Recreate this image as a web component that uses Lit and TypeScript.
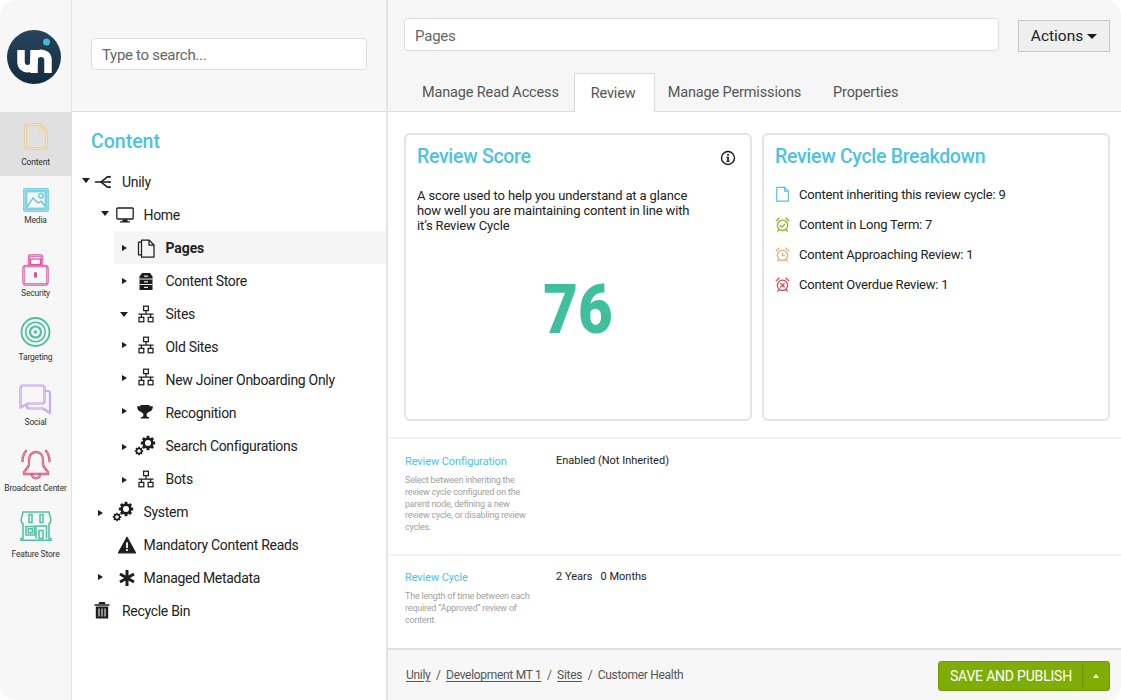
import { LitElement, html, css, svg } from "lit";
import { customElement } from "lit/decorators.js";

const INK = "#1d1d1d";

const sitemap = svg`<g fill="none" stroke="${INK}" stroke-width="1.250"><rect x="9.600" y="4.200" width="4.800" height="4.400"/><rect x="5" y="15.400" width="4.800" height="4.400"/><rect x="14.200" y="15.400" width="4.800" height="4.400"/><path d="M12 8.600v3.600M4.500 12.200h15M7.400 12.200v3.200M16.600 12.200v3.200"/></g>`;
const gear = (cx: number, cy: number, r: number) => {
  const teeth = [0, 45, 90, 135].map(
    (a) => svg`<rect x="${cx - r}" y="${cy - r * 0.2}" width="${r * 2}" height="${r * 0.4}" fill="${INK}" transform="rotate(${a} ${cx} ${cy})"/>`
  );
  return svg`${teeth}<circle cx="${cx}" cy="${cy}" r="${r * 0.78}" fill="${INK}"/><circle cx="${cx}" cy="${cy}" r="${r * 0.42}" fill="#fff"/>`;
};
const gears = svg`${gear(15, 9, 7.200)}${gear(6, 17, 4.200)}`;

const treeIcons: Record<string, unknown> = {
  unily: svg`<g fill="none" stroke="${INK}" stroke-width="1.600" stroke-linecap="round"><path d="M4.500 12H18.500"/><path d="M18.500 6.800h-2L10 12l6.500 5.200h2"/></g><circle cx="18.800" cy="6.800" r="1.100" fill="${INK}"/><circle cx="18.800" cy="12" r="1.100" fill="${INK}"/><circle cx="18.800" cy="17.200" r="1.100" fill="${INK}"/>`,
  monitor: svg`<rect x="3.800" y="5" width="16.400" height="11" rx="1" fill="none" stroke="${INK}" stroke-width="1.300"/><path d="M9.500 16.500h5v1.700h2.400v1.300H7.100v-1.300h2.400z" fill="${INK}"/>`,
  copy: svg`<g fill="none" stroke="${INK}" stroke-width="1.250" stroke-linejoin="round"><path d="M7.500 6V4h7.500l5 5v12h-12.500z"/><path d="M15 4v5h5"/><path d="M7.500 6H4.500v12.800h3"/></g>`,
  store: svg`<path d="M8 4h8l2.500 3.500v13.500h-13V7.500z" fill="${INK}"/><g fill="#fff"><rect x="5.500" y="9.600" width="13" height=".9"/><rect x="5.500" y="15" width="13" height=".9"/><rect x="10" y="6.600" width="4" height="1.100"/><rect x="10" y="12.300" width="4" height="1.100"/><rect x="10" y="17.800" width="4" height="1.100"/></g>`,
  sitemap,
  trophy: svg`<path d="M7.500 4h9v1.200h3.300c.2 3-1.200 5-4.100 5.700-.7.900-1.300 1.300-2 1.600v2.500c0 .7 1.300.9 2.400 1.300v1.200H7.900v-1.200c1.100-.4 2.400-.6 2.400-1.300v-2.500c-.7-.3-1.300-.7-2-1.600C5.400 10.200 4 8.200 4.200 5.200h3.300z" fill="${INK}"/>`,
  gears,
  warning: svg`<path d="M12 4.200 20.500 19.800H3.500z" fill="${INK}" stroke="${INK}" stroke-width="1.200" stroke-linejoin="round"/><rect x="11.100" y="9.300" width="1.800" height="5.800" fill="#fff"/><rect x="11.100" y="16.200" width="1.800" height="1.800" fill="#fff"/>`,
  asterisk: svg`<g stroke="${INK}" stroke-width="3"><path d="M12 4v16M5 8l14 8M19 8L5 16"/></g>`,
  trash: svg`<path d="M4.500 5.200h15v1.500h-15zM9.200 3h5.600l.7 2H8.500z" fill="${INK}"/><path d="M5.800 7.500h12.400v12H5.800z" fill="${INK}"/><path d="M9 9.500v8M12 9.500v8M15 9.500v8" stroke="#fff" stroke-width="1"/>`,
};

type Row = { label: string; icon: string; caret?: "r" | "d"; cx: number; ix: number; tx: number; selected?: boolean; cy?: number; iy?: number };
const rows: Row[] = [
  { label: "Unily", icon: "unily", caret: "d", cx: 86, ix: 103, tx: 122, cy: -1 },
  { label: "Home", icon: "monitor", caret: "d", cx: 105, ix: 125, tx: 143.5, cy: -1 },
  { label: "Pages", icon: "copy", caret: "r", cx: 124.5, ix: 146, tx: 165.5, selected: true },
  { label: "Content Store", icon: "store", caret: "r", cx: 124.5, ix: 146, tx: 165.5 },
  { label: "Sites", icon: "sitemap", caret: "d", cx: 124, ix: 145.5, tx: 165.5, cy: 1 },
  { label: "Old Sites", icon: "sitemap", caret: "r", cx: 124.5, ix: 145.5, tx: 165.5, cy: -2, iy: -2 },
  { label: "New Joiner Onboarding Only", icon: "sitemap", caret: "r", cx: 124.5, ix: 145.5, tx: 165.5, cy: -2, iy: -3 },
  { label: "Recognition", icon: "trophy", caret: "r", cx: 124.5, ix: 145, tx: 165.5, cy: -2 },
  { label: "Search Configurations", icon: "gears", caret: "r", cx: 124.5, ix: 145, tx: 165.5, cy: 1 },
  { label: "Bots", icon: "sitemap", caret: "r", cx: 124.5, ix: 145.5, tx: 165.5, cy: 1 },
  { label: "System", icon: "gears", caret: "r", cx: 100, ix: 123, tx: 143.5, cy: 1 },
  { label: "Mandatory Content Reads", icon: "warning", cx: 100, ix: 127, tx: 143.5 },
  { label: "Managed Metadata", icon: "asterisk", caret: "r", cx: 100, ix: 127, tx: 143.5, cy: -1 },
  { label: "Recycle Bin", icon: "trash", cx: 86, ix: 102, tx: 122 },
];

/* Rail icons: a coloured stroke with a pale line down its middle, which gives the reference's double outline. */
const dbl = (d: string, color: string, w = 2.4) => svg`<path d="${d}" fill="none" stroke="${color}" stroke-width="${w}" stroke-linejoin="round" stroke-linecap="round"/><path d="${d}" fill="none" stroke="#ffffff" stroke-opacity=".65" stroke-width=".7" stroke-linejoin="round"/>`;

const railItems = [
  { label: "Content", h: 64, pt: 11, gap: 6, active: true, w: 24, ht: 27, box: "0 0 24 27",
    art: svg`${dbl("M3 1.500h13l6.500 6.500v16c0 1-.5 1.500-1.500 1.500H3c-1 0-1.500-.5-1.500-1.500v-21c0-1 .5-1.500 1.500-1.500z", "#ecca86")}${dbl("M16 2v6.500h6", "#ecca86", 1.600)}` },
  { label: "Media", h: 64, pt: 12, gap: 2, w: 26, ht: 24, box: "0 0 26 24",
    art: svg`${dbl("M1.500 1.500h23v21h-23z", "#4fc3dc")}<path d="M4 19l6-9 5 5 3-2 4 5" fill="none" stroke="#4fc3dc" stroke-width="1.300"/><rect x="3.800" y="3.800" width="18.400" height="16.400" fill="none" stroke="#4fc3dc" stroke-width="1"/><circle cx="18" cy="7.800" r="2.300" fill="none" stroke="#4fc3dc" stroke-width="1.200"/>` },
  { label: "Security", h: 66, pt: 14, gap: 1, w: 27, ht: 32, box: "0 0 27 32",
    art: svg`${dbl("M7 12V2.500c0-.7.5-1 1-1h11c.500 0 1 .3 1 1V12", "#d8569f")}${dbl("M4 12h19c1.500 0 2.500 1 2.500 2.500V28c0 1.500-1 2.500-2.500 2.500H4c-1.500 0-2.500-1-2.500-2.500V14.500C1.500 13 2.500 12 4 12z", "#d8569f")}<rect x="8.500" y="5" width="10" height="5.500" fill="none" stroke="#d8569f" stroke-width="1.200"/><rect x="12" y="18" width="3" height="6" rx="1.400" fill="#d8569f"/>` },
  { label: "Targeting", h: 66, pt: 11, gap: 4, w: 31, ht: 30, box: "0 0 31 30",
    art: svg`<g fill="none" stroke="#4cc2a3"><circle cx="15.500" cy="15" r="14" stroke-width="1.900"/><circle cx="15.500" cy="15" r="9.800" stroke-width="1.600"/><circle cx="15.500" cy="15" r="5.500" stroke-width="2.200"/></g><circle cx="15.500" cy="15" r="1.800" fill="#4cc2a3"/>` },
  { label: "Social", h: 66, pt: 12, gap: 2, w: 33, ht: 30, box: "0 0 33 30",
    art: svg`${dbl("M8 21v1c0 1.500 1 2.500 2.500 2.500H24l7 4.500V9.500C31 8 30 7 28.500 7H26", "#bd95e8", 2.200)}${dbl("M4 1.500h19c1.500 0 2.500 1 2.500 2.500v13c0 1.500-1 2.500-2.500 2.500H9l-7.500 4V4c0-1.500 1-2.500 2.500-2.500z", "#bd95e8", 2.200)}` },
  { label: "Broadcast Center", h: 66, pt: 11, gap: 2, w: 32, ht: 31, box: "0 0 32 31",
    art: svg`${dbl("M16 3c4.500 0 7 3.500 7 8v4c0 3.500 3.500 5 5 8.500V25H4v-1.500C5.500 20 9 18.500 9 15v-4c0-4.500 2.500-8 7-8z", "#cf4f79")}${dbl("M12 25.500c.5 5 7.500 5 8 0", "#cf4f79")}${dbl("M6 2C3.500 5 2.500 8 2.500 12", "#cf4f79")}${dbl("M26 2c2.500 3 3.500 6 3.500 10", "#cf4f79")}` },
  { label: "Feature Store", h: 66, pt: 7, gap: 7, w: 32, ht: 30, box: "0 0 32 30",
    art: svg`<g fill="none" stroke="#4cc2a3" stroke-width="1.500"><path d="M3 1h26l2 8c0 2-1 3-2 3.500V27.500h2v1.700H1v-1.700h2V12.500C2 12 1 11 1 9z"/><rect x="9" y="3.500" width="3" height="8"/><rect x="20" y="3.500" width="3" height="8"/><path d="M6 15.500h8.500v8.500H6z"/><rect x="8.300" y="17.800" width="4" height="4"/><path d="M16 27.500V15h10.500v12.500"/><rect x="19" y="19.500" width="4" height="8"/></g>` },
];

const alarm = (color: string, mark: unknown) => svg`<g fill="none" stroke="${color}" stroke-width="1.600"><circle cx="9" cy="10.500" r="6.200"/><path d="M1.500 5 5 1.800M16.500 5 13 1.800M4.800 15.500 3.300 17.500M13.200 15.500 14.700 17.500" stroke-linecap="round"/>${mark}</g>`;
const breakdown = [
  { text: "Content inheriting this review cycle: 9",
    art: svg`<path d="M2 1h9.500L16 5.500V17.500H2zM11.500 1v4.500H16" fill="none" stroke="#55c3de" stroke-width="1.400" stroke-linejoin="round"/>` },
  { text: "Content in Long Term: 7", art: alarm("#84b52a", svg`<path d="M6 10.500l2.200 2.200L12 8.800"/>`) },
  { text: "Content Approaching Review: 1", art: alarm("#e6ab79", svg`<path d="M9 7v3.800h3"/>`) },
  { text: "Content Overdue Review: 1", art: alarm("#cf5060", svg`<path d="M6.500 8l5 5M11.500 8l-5 5"/>`) },
];

@customElement("app-root")
export class AppRoot extends LitElement {
  static styles = css`
    :host { display: block; width: 1121px; height: 700px; background: #fff; font-family: Roboto, "Liberation Sans", sans-serif; color: #1d1d1d; }
    * { box-sizing: border-box; }
    .window { display: flex; width: 1121px; height: 700px; border-radius: 16px; overflow: hidden; background: #fff; }

    .rail { width: 72px; flex: none; background: #f7f7f7; border-right: 1px solid #e2e2e2; display: flex; flex-direction: column; }
    .logo-box { height: 112px; display: flex; padding: 30px 0 0 7px; }
    .rail-item { display: flex; flex-direction: column; align-items: center; font-size: 8.500px; letter-spacing: -.2px; line-height: 12px; color: #333; white-space: nowrap; }
    .rail-item.active { background: #e0e0e0; }
    .rail-item svg { display: block; flex: none; }

    .tree-pane { width: 316px; flex: none; border-right: 2px solid #e4e4e4; display: flex; flex-direction: column; }
    .tree-head { height: 112px; flex: none; background: #f7f7f7; border-bottom: 1px solid #dfdfdf; padding: 38px 19px 0 19px; }
    .search { height: 32px; background: #fff; border: 1px solid #dcdcdc; border-radius: 4px; padding: 1px 10px 0; display: flex; align-items: center; font-size: 15px; letter-spacing: -.3px; color: #666; }
    .tree-body { flex: 1; background: #fff; }
    .section { font-size: 19.500px; font-weight: 500; color: #4cc3e0; padding: 18px 0 0 19px; height: 53px; line-height: 23px; }
    .row { height: 33px; display: flex; align-items: center; font-size: 14px; letter-spacing: -.3px; color: #222; }
    .row.selected { background: #f5f5f5; font-weight: 700; margin-left: 42px; letter-spacing: -.1px; }
    .row svg { display: block; flex: none; }
    .caret { flex: none; width: 0; height: 0; }
    .caret.r { border-top: 3.500px solid transparent; border-bottom: 3.500px solid transparent; border-left: 5px solid #1d1d1d; }
    .caret.d { border-left: 4px solid transparent; border-right: 4px solid transparent; border-top: 5px solid #1d1d1d; }
    .caret.none { width: 5px; }
    .label { white-space: nowrap; }

    .main { flex: 1; min-width: 0; display: flex; flex-direction: column; background: #fff; }
    .main-head { height: 112px; flex: none; background: #f6f6f6; border-bottom: 1px solid #dcdcdc; display: flex; flex-direction: column; }
    .title-row { display: flex; gap: 19px; padding: 18px 11px 0 16px; height: 73px; }
    .title-input { flex: 1; height: 33px; background: #fff; border: 1px solid #dcdcdc; border-radius: 4px; padding: 2px 10px 0; display: flex; align-items: center; font-size: 15px; letter-spacing: -.2px; color: #666; }
    .actions { width: 92px; height: 32px; margin-top: 2px; background: #efefef; border: 1px solid #c9c9c9; display: flex; align-items: center; justify-content: center; gap: 4px; font-size: 15.500px; color: #222; }
    .actions i { width: 0; height: 0; border-left: 5px solid transparent; border-right: 5px solid transparent; border-top: 5px solid #1d1d1d; }
    .tabs { display: flex; padding-left: 16px; height: 39px; margin-bottom: -1px; font-size: 14.500px; letter-spacing: -.15px; color: #555; }
    .tab { display: flex; align-items: center; white-space: nowrap; }
    .tab.first { padding: 0 15px 0 18px; }
    .tab.on { width: 81px; background: #fff; border: 1px solid #dcdcdc; border-bottom: 0; padding-left: 16px; }
    .tab.wide { padding: 0 15px 0 13px; }
    .tab.props { padding-left: 17px; }

    .cards { display: flex; gap: 10px; padding: 21px 11px 16px 16px; height: 327px; flex: none; border-bottom: 2px solid #f1f1f1; }
    .card { flex: 1; border: 2px solid #e3e3e3; border-radius: 6px; padding: 10px 11px; display: flex; flex-direction: column; }
    .card-head { display: flex; justify-content: space-between; align-items: center; }
    .card h2 { margin: 0; font-size: 19.500px; letter-spacing: -.3px; font-weight: 500; color: #4cc3e0; line-height: 24px; }
    .info { margin: 2px 3px 0 0; }
    .desc { margin: 18.500px 0 0; font-size: 13px; letter-spacing: -.14px; line-height: 15px; color: #222; width: 285px; }
    .score { margin-top: 38px; text-align: center; font-size: 68px; line-height: 78px; font-weight: 900; color: #3fbf9e; transform: scaleX(.88); }
    .bd-list { display: flex; flex-direction: column; gap: 10px; margin-top: 15px; }
    .bd { display: flex; align-items: center; gap: 9px; height: 20px; font-size: 13px; letter-spacing: -.2px; color: #222; }
    .bd svg { display: block; flex: none; }

    .cfg { display: grid; grid-template-columns: 151px 1fr; padding: 0 17px; border-bottom: 2px solid #f1f1f1; }
    .cfg.one { height: 117px; padding-top: 15px; }
    .cfg.two { height: 92px; padding-top: 14px; border-bottom: 0; }
    .cfg-name { margin-top: 1px; font-size: 11px; line-height: 14px; color: #4cc3e0; letter-spacing: -.1px; }
    .cfg-help { margin: 6px 0 0; font-size: 9px; letter-spacing: -.2px; line-height: 11.800px; color: #a0a0a0; width: 125px; }
    .cfg-val { font-size: 11px; line-height: 13px; color: #222; }

    .foot { flex: 1; background: #f7f7f7; border-top: 2px solid #e0e0e0; display: flex; align-items: center; justify-content: space-between; padding: 0 11px 0 18px; }
    .crumbs { display: flex; gap: 5.500px; font-size: 12px; color: #555; letter-spacing: -.3px; }
    .crumbs u { text-underline-offset: 2px; }
    .publish { display: flex; height: 30px; margin-top: 2px; background: #7fad05; border: 1px solid #6f9a05; border-radius: 3px; color: #fff; font-size: 14px; letter-spacing: -.2px; }
    .publish span { display: flex; align-items: center; padding: 0 10px 0 11px; }
    .publish b { width: 27px; display: flex; align-items: center; justify-content: center; border-left: 1px solid #6c9505; }
    .publish b i { width: 0; height: 0; border-left: 3.500px solid transparent; border-right: 3.500px solid transparent; border-bottom: 4px solid #fff; }
  `;

  private renderLogo() {
    return html`<svg width="54" height="54" viewBox="0 0 54 54">
      <defs><linearGradient id="lg" x1="0" y1="0" x2="0" y2="1"><stop offset="0" stop-color="#27455c"/><stop offset="1" stop-color="#142c40"/></linearGradient></defs>
      <circle cx="27" cy="27" r="27" fill="url(#lg)"/>
      <path d="M14 20v12c0 9 13 9 13 0V20" fill="none" stroke="#fff" stroke-width="7.500"/>
      <path d="M27 43V30c0-9 14-9 14 0v13" fill="none" stroke="#fff" stroke-width="7.500"/>
      <circle cx="39.500" cy="12" r="3.500" fill="#3fb9dd"/>
    </svg>`;
  }

  private renderRow(r: Row) {
    const base = r.selected ? 42 + 72 : 72;
    const caretW = r.caret === "d" ? 8 : 5;
    const caretLeft = r.cx - caretW / 2;
    const iconLeft = r.ix - 12;
    return html`<div class="row ${r.selected ? "selected" : ""}">
      <span class="caret ${r.caret ?? "none"}" style="margin-left:${caretLeft - base}px;transform:translateY(${r.cy ?? 0}px)"></span>
      <svg width="24" height="24" viewBox="0 0 24 24" style="margin-left:${iconLeft - caretLeft - caretW}px;transform:translateY(${r.iy ?? 0}px)">${treeIcons[r.icon]}</svg>
      <span class="label" style="margin-left:${r.tx - iconLeft - 24}px">${r.label}</span>
    </div>`;
  }

  render() {
    return html`<div class="window">
      <nav class="rail">
        <div class="logo-box">${this.renderLogo()}</div>
        ${railItems.map(
          (it) => html`<div class="rail-item ${it.active ? "active" : ""}" style="height:${it.h}px;padding-top:${it.pt}px">
            <svg width="${it.w}" height="${it.ht}" viewBox="${it.box}">${it.art}</svg>
            <span style="margin-top:${it.gap}px">${it.label}</span>
          </div>`
        )}
      </nav>
      <aside class="tree-pane">
        <div class="tree-head"><div class="search">Type to search...</div></div>
        <div class="tree-body">
          <div class="section">Content</div>
          ${rows.map((r) => this.renderRow(r))}
        </div>
      </aside>
      <main class="main">
        <div class="main-head">
          <div class="title-row">
            <div class="title-input">Pages</div>
            <div class="actions">Actions <i></i></div>
          </div>
          <div class="tabs">
            <div class="tab first">Manage Read Access</div>
            <div class="tab on">Review</div>
            <div class="tab wide">Manage Permissions</div>
            <div class="tab props">Properties</div>
          </div>
        </div>
        <div class="cards">
          <section class="card">
            <div class="card-head"><h2>Review Score</h2>
              <svg class="info" width="16" height="16" viewBox="0 0 16 16"><circle cx="8" cy="8" r="6.500" fill="none" stroke="#1d1d1d" stroke-width="1.400"/><rect x="7.200" y="6.800" width="1.700" height="4.800" fill="#1d1d1d"/><rect x="6.300" y="6.800" width="1.800" height="1" fill="#1d1d1d"/><rect x="6.300" y="10.800" width="3.400" height="1" fill="#1d1d1d"/><rect x="7.200" y="4" width="1.700" height="1.700" fill="#1d1d1d"/></svg>
            </div>
            <p class="desc">A score used to help you understand at a glance how well you are maintaining content in line with it’s Review Cycle</p>
            <div class="score">76</div>
          </section>
          <section class="card">
            <div class="card-head"><h2>Review Cycle Breakdown</h2></div>
            <div class="bd-list">
              ${breakdown.map(
                (b) => html`<div class="bd"><svg width="15" height="17" viewBox="0 0 18 19">${b.art}</svg><span>${b.text}</span></div>`
              )}
            </div>
          </section>
        </div>
        <div class="cfg one">
          <div><div class="cfg-name">Review Configuration</div>
            <p class="cfg-help">Select between inheriting the review cycle configured on the parent node, defining a new review cycle, or disabling review cycles.</p></div>
          <div class="cfg-val">Enabled (Not Inherited)</div>
        </div>
        <div class="cfg two">
          <div><div class="cfg-name">Review Cycle</div>
            <p class="cfg-help">The length of time between each required “Approved” review of content.</p></div>
          <div class="cfg-val">2 Years &nbsp; 0 Months</div>
        </div>
        <footer class="foot">
          <div class="crumbs"><u>Unily</u><span>/</span><u>Development MT 1</u><span>/</span><u>Sites</u><span>/</span><span>Customer Health</span></div>
          <div class="publish"><span>SAVE AND PUBLISH</span><b><i></i></b></div>
        </footer>
      </main>
    </div>`;
  }
}
